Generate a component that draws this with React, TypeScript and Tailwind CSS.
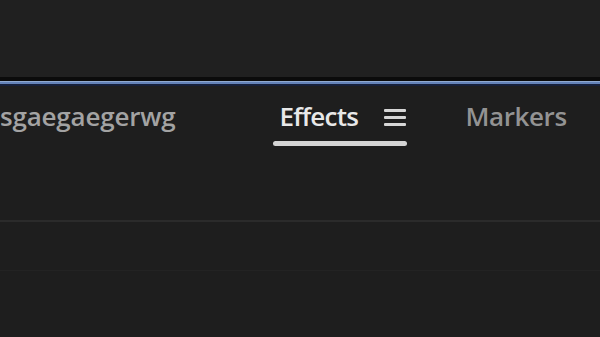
export default function App() {
  return (
    <div className="w-[600px] h-[337px] overflow-hidden bg-[#1e1e1e] font-['Open_Sans',sans-serif]">
      {/* header strip above the panel */}
      <div className="h-[77px] bg-[#202020]" />
      <div className="h-[4px] bg-[#0b0b0b]" />
      <div className="h-[1px] bg-[#8fa9d0]" />
      <div className="h-[2px] bg-[#6382b8]" />
      <div className="h-[2px] bg-[#16203a]" />

      {/* tab bar */}
      <div className="flex items-start pt-[14px] text-[26px] leading-[32px] font-semibold">
        <div className="text-[#a3a3a3] tracking-[-0.2px]">sgaegaegerwg</div>
        <div className="ml-[98px] flex flex-col">
          <div className="flex items-center pl-[6px] pr-[1px]">
            <span className="text-[#e8e8e8] tracking-[-0.8px]">Effects</span>
            <svg className="ml-auto mt-[2px]" width="22" height="21" viewBox="0 0 22 21">
              <rect x="0" y="2" width="22" height="3" rx="1" fill="#d6d6d6" />
              <rect x="0" y="9" width="22" height="3" rx="1" fill="#d6d6d6" />
              <rect x="0" y="16" width="22" height="3" rx="1" fill="#d6d6d6" />
            </svg>
          </div>
          <div className="mt-[9px] h-[5px] w-[134px] rounded-full bg-[#d4d4d4]" />
        </div>
        <div className="ml-[58px] text-[#939393] tracking-[-0.4px]">Markers</div>
      </div>

      <div className="mt-[74px] h-[2px] bg-[#2b2b2b]" />
      <div className="mt-[48px] h-[1px] bg-[#232323]" />
    </div>
  );
}
